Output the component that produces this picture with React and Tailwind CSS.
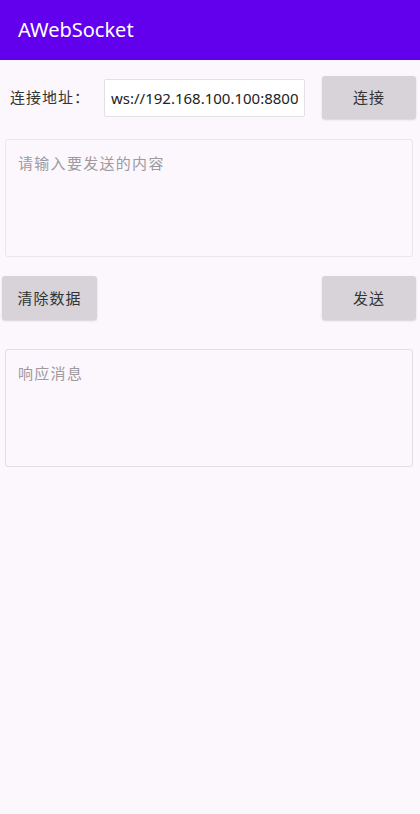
import React, { useState } from 'react';

const cjk = { fontFamily: '"Noto Sans CJK SC", "Noto Sans", sans-serif' };

const App = () => {
  const [url, setUrl] = useState('ws://192.168.100.100:8800');
  const [message, setMessage] = useState('');
  const [response, setResponse] = useState('');

  return (
    <div className="min-h-[814px] w-full bg-[#fbf7fc]" style={cjk}>
      {/* Toolbar */}
      <div className="flex h-[60px] items-center bg-[#6200ee] pl-[18px]">
        <h1 className="text-[20px] font-normal text-white" style={{ fontFamily: '"Noto Sans", sans-serif' }}>
          AWebSocket
        </h1>
      </div>

      {/* Connect row */}
      <div className="mt-[16px] flex items-center pl-[10px] pr-[4px]">
        <span className="w-[94px] text-[15px] tracking-[1px] text-[#333]">连接地址：</span>
        <input
          value={url}
          onChange={(e) => setUrl(e.target.value)}
          className="h-[38px] w-[201px] rounded-[2px] border border-[#e4e0e6] bg-white px-[6px] text-[15px] text-[#222] outline-none"
          style={{ fontFamily: '"Noto Sans", sans-serif' }}
        />
        <button className="ml-auto h-[43px] w-[94px] rounded-[3px] bg-[#d7d3d9] text-[15px] tracking-[1px] text-[#333] shadow-[0_1px_2px_rgba(0,0,0,0.15)]">
          连接
        </button>
      </div>

      {/* Message input */}
      <div className="mt-[20px] pl-[5px] pr-[7px]">
        <textarea
          value={message}
          onChange={(e) => setMessage(e.target.value)}
          placeholder="请输入要发送的内容"
          className="block h-[118px] w-full resize-none rounded-[3px] border border-[#ebe6ed] bg-[#fbf7fc] px-[12px] py-[12px] text-[15px] tracking-[1.3px] text-[#222] outline-none placeholder:text-[#9e9a9f]"
        />
      </div>

      {/* Actions */}
      <div className="mt-[19px] flex items-center justify-between pl-[2px] pr-[4px]">
        <button className="h-[44px] w-[95px] rounded-[3px] bg-[#d7d3d9] text-[15px] tracking-[1px] text-[#333] shadow-[0_1px_2px_rgba(0,0,0,0.15)]">
          清除数据
        </button>
        <button
          onClick={() => setResponse(message)}
          className="h-[44px] w-[94px] rounded-[3px] bg-[#d7d3d9] text-[15px] tracking-[1px] text-[#333] shadow-[0_1px_2px_rgba(0,0,0,0.15)]"
        >
          发送
        </button>
      </div>

      {/* Response */}
      <div className="mt-[29px] pl-[5px] pr-[7px]">
        <textarea
          value={response}
          readOnly
          placeholder="响应消息"
          className="block h-[118px] w-full resize-none rounded-[3px] border border-[#e2dde4] bg-[#fbf7fc] px-[12px] py-[12px] text-[15px] tracking-[1.3px] text-[#222] outline-none placeholder:text-[#9e9a9f]"
        />
      </div>
    </div>
  );
};

export default App;
